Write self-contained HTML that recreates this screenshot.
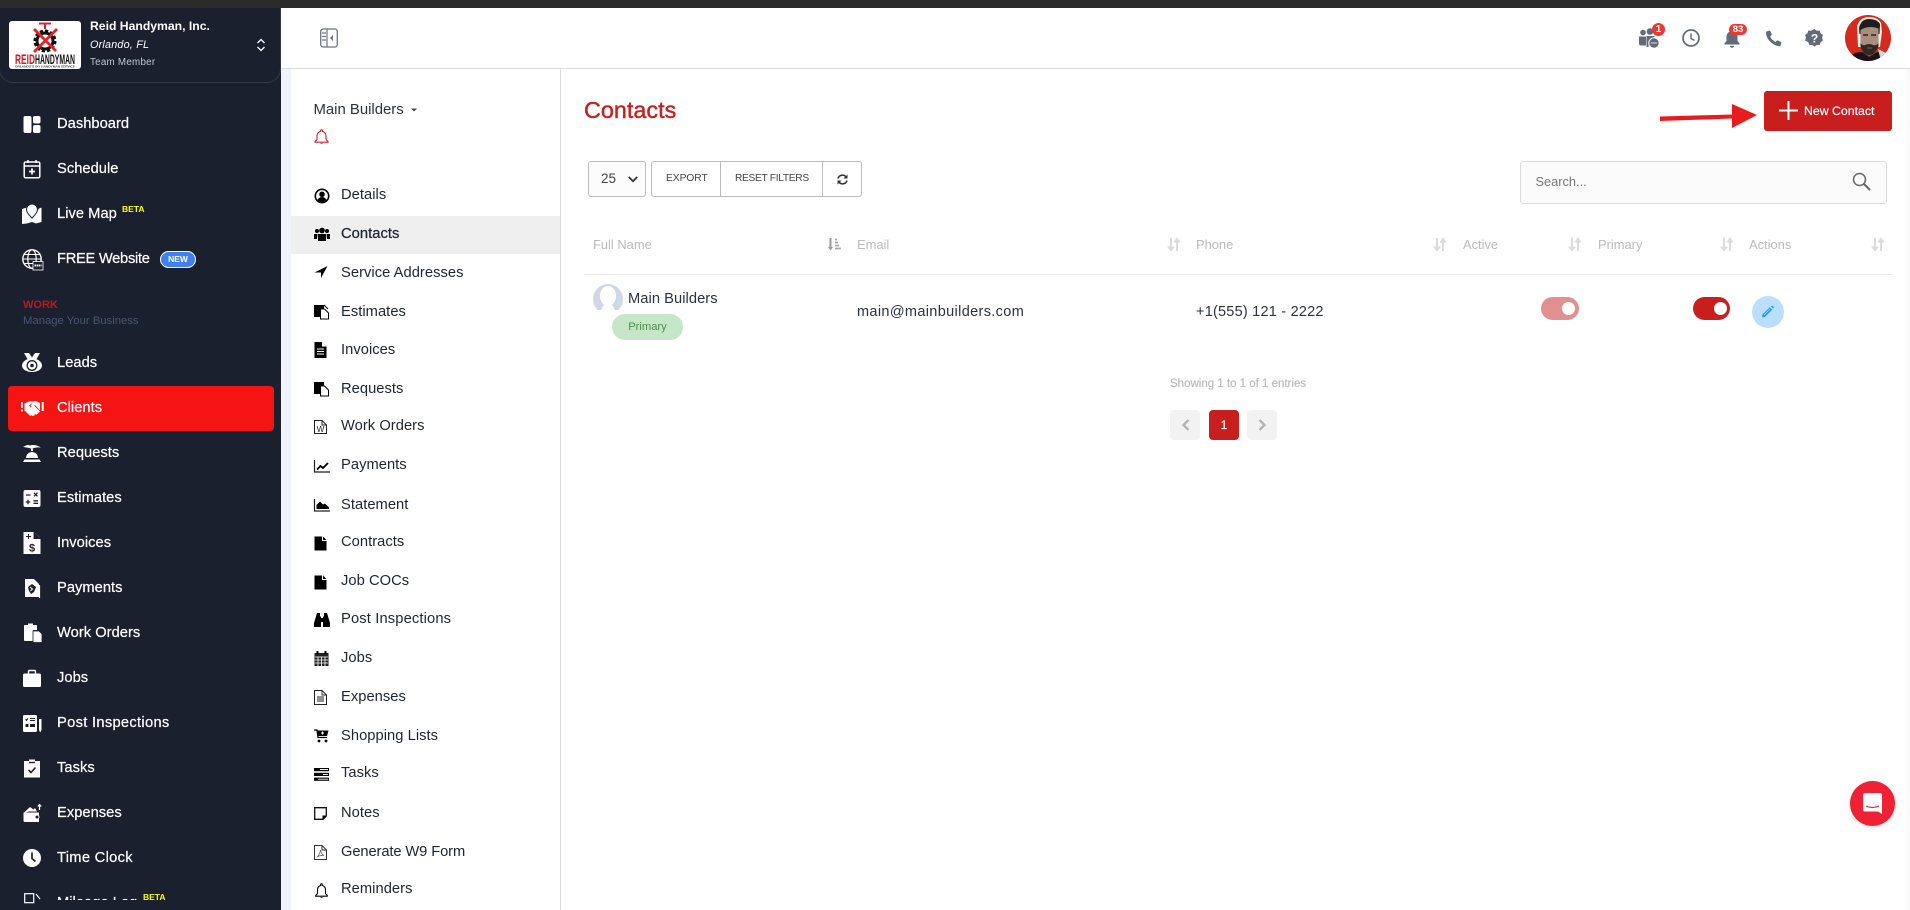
<!DOCTYPE html>
<html lang="en">
<head>
<meta charset="utf-8">
<title>Contacts</title>
<style>
*{box-sizing:border-box}
html,body{margin:0;padding:0;width:1910px;height:910px;overflow:hidden;background:#fff;font-family:"Liberation Sans",Arial,sans-serif}
.a{position:absolute;white-space:nowrap}
svg{position:absolute;display:block;overflow:visible}
#side{position:absolute;left:0;top:8px;width:281px;height:902px;background:#1a202e;overflow:hidden}
.si{position:absolute;left:57px;color:#fff;font-size:14.7px;line-height:22px;height:22px;white-space:nowrap;-webkit-text-stroke:.2px #fff;letter-spacing:.03px}
.ci{position:absolute;left:341px;color:#1f2433;font-size:14.7px;line-height:20px;height:20px;white-space:nowrap;letter-spacing:.05px}
.th{position:absolute;top:236px;color:#bbb;font-size:12.9px;line-height:18px;white-space:nowrap}
.pg{position:absolute;top:410px;width:30px;height:30px;background:#f2f2f2;border-radius:4px}
.sw{fill:#fff}
.k{fill:#000}
.g{fill:#636b78}
.sort path{stroke:#dcdcdc;stroke-width:2;fill:none}
</style>
</head>
<body>
<div class="a" style="left:0;top:0;width:1910px;height:8px;background:#2b2b2b"></div>

<!-- top bar -->
<div class="a" style="left:281px;top:8px;width:1629px;height:61px;background:#fff;border-bottom:1px solid #d9dce4"></div>
<div class="a" style="left:281px;top:69px;width:10px;height:841px;background:#f0f3f9"></div>
<div class="a" style="left:1906px;top:69px;width:4px;height:841px;background:#fbfbfb"></div>
<svg style="left:320px;top:28px" width="18" height="20" viewBox="0 0 18 20"><rect x=".7" y="1" width="16.6" height="18" rx="2.5" fill="none" stroke="#6c7380" stroke-width="1.3"/><path d="M7 1v18M2 5h4M2 8.500h4M2 12h4" stroke="#6c7380" stroke-width="1.200" fill="none"/><path d="M13 7l-3 3 3 3z" fill="#6c7380"/></svg>

<!-- top icons -->
<svg style="left:1639px;top:27px" width="22" height="22" viewBox="0 0 22 22">
<circle cx="4" cy="5.500" r="2.800" class="g"/><circle cx="11" cy="4.500" r="3.300" class="g"/><path d="M0 9.500h7v9H2a2 2 0 0 1-2-2zM7.500 9h8v5a6 6 0 0 0-6 6h-2z" class="g"/><circle cx="15" cy="16" r="5.200" class="g" stroke="#fff" stroke-width="1"/><circle cx="13" cy="16" r=".7" fill="#fff"/><circle cx="15" cy="16" r=".7" fill="#fff"/><circle cx="17" cy="16" r=".7" fill="#fff"/></svg>
<div class="a" style="left:1652px;top:23px;width:13px;height:13px;border-radius:50%;background:#ea3a33;color:#fff;font-size:10px;font-weight:bold;line-height:13px;text-align:center">1</div>
<svg style="left:1682px;top:29px" width="18" height="18" viewBox="0 0 18 18"><circle cx="9" cy="9" r="8" fill="none" stroke="#636b78" stroke-width="1.700"/><path d="M9 4.500V9.500l3.500 2" fill="none" stroke="#636b78" stroke-width="1.500"/></svg>
<svg style="left:1723px;top:28px" width="18" height="21" viewBox="0 0 18 21"><path d="M9 1.500a1.400 1.400 0 0 1 1.400 1.400v.4A5.500 5.500 0 0 1 14.500 8.500V13l2 2.200V16.500H1.500V15.200L3.500 13V8.500A5.500 5.500 0 0 1 7.600 3.300v-.4A1.400 1.400 0 0 1 9 1.500z" class="g"/><path d="M7 17.800h4a2 2 0 0 1-4 0z" class="g"/></svg>
<div class="a" style="left:1729px;top:24px;width:18px;height:11px;border-radius:6px;background:#ea3a33;color:#fff;font-size:9.500px;font-weight:bold;line-height:11px;text-align:center">83</div>
<svg style="left:1765px;top:30px" width="17" height="17" viewBox="0 0 17 17"><path d="M4.200.6 1 1.800C.6 8.500 7.500 16 15.300 16.300l1-3.300a1 1 0 0 0-.5-1.100l-3-1.400a1 1 0 0 0-1.100.2l-1.200 1.300C8.300 11 6 8.700 5.200 6.500l1.300-1.200a1 1 0 0 0 .2-1.100L5.300 1.100A1 1 0 0 0 4.200.6z" class="g"/></svg>
<svg style="left:1805px;top:28px" width="19" height="20" viewBox="0 0 19 20"><path d="M9.500 0l2.300 1.700 2.900-.1.900 2.700 2.300 1.700-.8 2.800.8 2.700-2.300 1.700-.9 2.800-2.900-.1-2.300 1.700-2.300-1.700-2.900.1-.9-2.800L.1 11.500l.8-2.700L.1 6l2.300-1.700.9-2.700 2.900.1z" class="g" transform="translate(0 1)"/><text x="9.500" y="14.500" font-size="12" font-weight="bold" text-anchor="middle" fill="#fff" font-family="Liberation Sans">?</text></svg>
<svg style="left:1845px;top:15px" width="46" height="46" viewBox="0 0 46 46"><defs><clipPath id="av"><circle cx="23" cy="23" r="23"/></clipPath></defs><g clip-path="url(#av)"><rect width="46" height="46" fill="#d32b1d"/><path d="M12 11Q15 2 24 2T36 8L37 17 35 32 13 32z" fill="#efe8e3"/><path d="M14 13Q16 4 24 4T35 9L34.500 19H14.500z" fill="#201c1b"/><path d="M15.500 15Q24 10 33.500 13.500V28L28 36H20L15.500 28z" fill="#a98d7d"/><path d="M15.500 28Q18 31 20 30 24 28 28 30 31 31 33.500 28V31Q30 40 24 40T15.500 31z" fill="#2f2927"/><path d="M22 33h5" stroke="#7c6357" stroke-width="1"/><path d="M18 20h5M26 20h5" stroke="#2b2524" stroke-width="1.400"/><path d="M3 46Q6 37 17 37L24 42 32 37Q41 38 43 46z" fill="#16161a"/><path d="M33 34l10 5-2 7h-5z" fill="#cfd6d9"/></g></svg>

<!-- sidebar -->
<div id="side"></div>
<div class="a" style="left:-1px;top:8px;width:282px;height:75px;border:1px solid #333947;border-top:0;border-radius:0 0 14px 14px"></div>
<div class="a" style="left:9px;top:21px;width:72px;height:48px;background:#fff;border-radius:3px"></div>
<svg style="left:9px;top:21px" width="72" height="48" viewBox="0 0 72 48">
<circle cx="36" cy="20" r="10" fill="none" stroke="#111" stroke-width="3" stroke-dasharray="3.200 2"/><circle cx="36" cy="20" r="8" fill="none" stroke="#111" stroke-width="3"/>
<path d="M25 8 47 30M48 8 25 31" stroke="#e8202a" stroke-width="2.800"/><path d="M30 2.500h12M36 2v6" stroke="#e8202a" stroke-width="2"/>
<text x="6" y="43" font-size="14" font-weight="bold" fill="#d8141e" textLength="20" lengthAdjust="spacingAndGlyphs" font-family="Liberation Sans">REID</text>
<text x="26" y="43" font-size="14" font-weight="bold" fill="#111" textLength="40" lengthAdjust="spacingAndGlyphs" font-family="Liberation Sans">HANDYMAN</text>
<text x="6" y="46.500" font-size="3" font-weight="bold" fill="#444" textLength="60" lengthAdjust="spacingAndGlyphs" font-family="Liberation Sans">ORLANDO'S DIY HANDYMAN SERVICE</text></svg>
<div class="a" style="left:90px;top:18px;color:#fff;font-size:12.200px;font-weight:bold;line-height:16px">Reid Handyman, Inc.</div>
<div class="a" style="left:90px;top:37px;color:#fff;font-size:10.800px;font-style:italic;line-height:16px;letter-spacing:.2px">Orlando, FL</div>
<div class="a" style="left:90px;top:55px;color:#c3c8d2;font-size:9.800px;line-height:16px;letter-spacing:.25px">Team Member</div>
<svg style="left:256px;top:38px" width="10" height="14" viewBox="0 0 10 14"><path d="M1.500 5 5 1.500 8.500 5M1.500 9 5 12.500 8.500 9" fill="none" stroke="#fff" stroke-width="1.300"/></svg>

<div class="a" style="left:8px;top:386px;width:266px;height:45px;background:#f51414;border-radius:4px"></div>

<div class="si" style="top:113px">Dashboard</div>
<div class="si" style="top:158px">Schedule</div>
<div class="si" style="top:203px">Live Map</div>
<div class="a" style="left:122px;top:204px;color:#ff0;font-size:8.500px;font-weight:bold;line-height:11px">BETA</div>
<div class="si" style="top:248px;letter-spacing:-.28px">FREE Website</div>
<div class="a" style="left:160px;top:251px;width:36px;height:17px;background:#3f80f0;border:1px solid #fff;border-radius:9px;color:#fff;font-size:8.500px;font-weight:bold;line-height:15px;text-align:center">NEW</div>
<div class="a" style="left:23px;top:299px;color:#b81c22;font-size:11px;font-weight:bold;line-height:13px">WORK</div>
<div class="a" style="left:23px;top:314px;color:#4a5670;font-size:11.300px;line-height:14px">Manage Your Business</div>
<div class="si" style="top:352px">Leads</div>
<div class="si" style="top:397px">Clients</div>
<div class="si" style="top:442px">Requests</div>
<div class="si" style="top:487px">Estimates</div>
<div class="si" style="top:532px">Invoices</div>
<div class="si" style="top:577px">Payments</div>
<div class="si" style="top:622px">Work Orders</div>
<div class="si" style="top:667px">Jobs</div>
<div class="si" style="top:712px;letter-spacing:.3px">Post Inspections</div>
<div class="si" style="top:757px">Tasks</div>
<div class="si" style="top:802px">Expenses</div>
<div class="si" style="top:847px;letter-spacing:.3px">Time Clock</div>
<div class="si" style="top:892px;height:8px;overflow:hidden">Mileage Log</div>
<div class="a" style="left:143px;top:892px;color:#ff0;font-size:8.500px;font-weight:bold;line-height:11px">BETA</div>

<!-- sidebar icons -->
<svg style="left:22px;top:114px" width="20" height="20" viewBox="0 0 20 20"><rect x="1.500" y="2" width="8" height="17" rx="2" class="sw"/><rect x="11" y="2" width="7.500" height="7.500" rx="2" class="sw"/><rect x="11" y="11" width="7.500" height="8" rx="2" class="sw"/></svg>
<svg style="left:22px;top:159px" width="20" height="20" viewBox="0 0 20 20"><rect x="2.200" y="3" width="15.600" height="15.800" rx="1.500" fill="none" stroke="#fff" stroke-width="1.500"/><path d="M2 7h16" stroke="#fff" stroke-width="1.500"/><path d="M6 1v3M14 1v3" stroke="#fff" stroke-width="1.500"/><path d="M10 9.500v6M7 12.500h6" stroke="#fff" stroke-width="1.800"/></svg>
<svg style="left:22px;top:204px" width="20" height="20" viewBox="0 0 20 20"><path d="M0 5l5-1.500L10 15l7-10.500 2.500-1V18l-5.500 1.500L10 18l-5 1.500-5 .500z" class="sw"/><path d="M10 0a5.500 5.500 0 0 1 5.500 5.500C15.500 9 10 14 10 14S4.500 9 4.500 5.500A5.500 5.500 0 0 1 10 0z" class="sw" stroke="#1a202e" stroke-width="1"/></svg>
<svg style="left:22px;top:249px" width="22" height="22" viewBox="0 0 22 22"><circle cx="10" cy="10" r="9.200" fill="none" stroke="#fff" stroke-width="1.400"/><ellipse cx="10" cy="10" rx="4.200" ry="9.200" fill="none" stroke="#fff" stroke-width="1.200"/><path d="M1 10h18M2 5.500h16M2 14.500h16" stroke="#fff" stroke-width="1.100"/><rect x="11" y="12.500" width="10" height="8.500" fill="#1a202e" stroke="#fff" stroke-width=".8"/><path d="M12.500 16.500h7" stroke="#fff" stroke-width="2" stroke-dasharray="1.500 .5"/></svg>
<svg style="left:22px;top:353px" width="20" height="20" viewBox="0 0 20 20"><path d="M2 0h5l3 4.500L13 0h5l-4 7H6z" class="sw"/><path d="M10 5.500c6 0 10 3.500 10 7s-4 6.500-10 6.500S0 16 0 12.500s4-7 10-7z" class="sw"/><circle cx="10" cy="12.500" r="4.800" fill="none" stroke="#1a202e" stroke-width="1.300"/><circle cx="10" cy="12.500" r="1.800" fill="#1a202e"/></svg>
<svg style="left:21px;top:398px" width="23" height="20" viewBox="0 0 23 20"><path d="M0 4h1.800v6H0zM0 11.500h1.800v2H0zM20.700 4h2v9h-2z" class="sw"/><path d="M3.500 5.500 9 3l3.500 1L8 7.500l1.500 2 3.500-2 6 6-1.500 1.500-1-.8.5 1.500-2 1-1-1-.5 1.800-2 .5-1-.8-1.500.5-6-5.700H3.500z" class="sw"/><path d="M12.500 3H15l4 2v7.500L14 7 10.500 9 9.500 8z" class="sw"/></svg>
<svg style="left:22px;top:443px" width="20" height="20" viewBox="0 0 20 20"><path d="M1 4Q6 1 8 2.500 13 1 19 4.500 13 4 10 6 7 4.500 1 4z" class="sw"/><path d="M9 6h2v2H9zM4 15a6 6 0 0 1 12 0z" class="sw"/><path d="M2.500 16.500h15L19 19H1z" class="sw"/></svg>
<svg style="left:22px;top:488px" width="20" height="20" viewBox="0 0 20 20"><rect x="1.500" y="2" width="17" height="17" rx="2" class="sw"/><path d="M4 7h4.500M6 11.700v4.600M3.800 14h4.500M11.500 12.800h4.500M11.500 15.300h4.500" stroke="#1a202e" stroke-width="1.300"/><path d="M12 4.800l3.500 3.500M15.500 4.800 12 8.300" stroke="#1a202e" stroke-width="1.200"/></svg>
<svg style="left:22px;top:532px" width="20" height="22" viewBox="0 0 20 22"><path d="M1.500 0H12l6.500 6.500V22H1.500z" class="sw"/><path d="M12 0v6.500h6.500" fill="#1a202e" stroke="#1a202e" stroke-width=".9"/><path d="M4 4.500h5M6.500 2v5" stroke="#1a202e" stroke-width="1"/><text x="10" y="19.500" font-size="11" font-weight="bold" text-anchor="middle" fill="#1a202e" font-family="Liberation Sans">$</text></svg>
<svg style="left:22px;top:578px" width="20" height="20" viewBox="0 0 20 20"><path d="M3 1h9l5 5v13H3z" class="sw"/><path d="M17.500 7v13" stroke="#fff" stroke-width="1.200"/><path d="M6 9l4-3 4 3-2 5-3 2-2-3z" fill="#1a202e"/><path d="M8 9l2.500 2-2 2" stroke="#fff" stroke-width="1" fill="none"/></svg>
<svg style="left:22px;top:623px" width="21" height="20" viewBox="0 0 21 20"><path d="M2 3q0-1 1-1h3V.5h5V2h3q1 0 1 1v4H11v11H3q-1 0-1-1z" class="sw"/><path d="M11 8h6l3 3v8.500H11z" class="sw" stroke="#1a202e" stroke-width=".8"/></svg>
<svg style="left:22px;top:668px" width="20" height="20" viewBox="0 0 20 20"><path d="M6.500 6V3.500q0-1 1-1h5q1 0 1 1V6" fill="none" stroke="#fff" stroke-width="1.400"/><rect x="1" y="5.500" width="18" height="13.500" rx="1.500" class="sw"/></svg>
<svg style="left:22px;top:713px" width="20" height="20" viewBox="0 0 20 20"><rect x="1" y="2" width="14" height="17" rx="1.500" class="sw"/><path d="M3.500 6.500l1 1 1.500-2M8 5.500h5M8 7.500h5" stroke="#1a202e" stroke-width="1"/><path d="M3.500 11h3v3h-3zM8 11h5v3H8z" fill="#1a202e"/><path d="M17 6h2.500v11L18.200 19.500 17 17z" class="sw"/></svg>
<svg style="left:22px;top:758px" width="20" height="20" viewBox="0 0 20 20"><path d="M2 3h5V1.500h6V3h5v16.500H2z" class="sw"/><path d="M7 4.500h6" stroke="#1a202e" stroke-width="1.400"/><path d="M6.500 12l2.500 2.500 4.500-5" fill="none" stroke="#1a202e" stroke-width="1.600"/></svg>
<svg style="left:22px;top:803px" width="20" height="20" viewBox="0 0 20 20"><path d="M1.500 10 8 4l3.500 2.500L13 5l2 3.500H7z" class="sw"/><path d="M1.500 9.500H17V19H3q-1.500 0-1.500-1.500z" class="sw"/><circle cx="15" cy="14" r="2" fill="#1a202e" stroke="#fff" stroke-width="1"/><path d="M17.500 7V2M15.800 3.500 17.500 1.500l1.700 2" stroke="#fff" stroke-width="1.200" fill="none"/></svg>
<svg style="left:22px;top:848px" width="20" height="20" viewBox="0 0 20 20"><circle cx="10" cy="10" r="9" class="sw"/><path d="M10 4.500V10.500l3.500 3" fill="none" stroke="#1a202e" stroke-width="1.700"/></svg>
<svg style="left:24px;top:893px" width="18" height="7" viewBox="0 0 18 7"><rect x=".7" y=".7" width="9" height="9" fill="none" stroke="#fff" stroke-width="1.200"/><path d="M12 1l4 5" stroke="#fff" stroke-width="1.200"/></svg>

<!-- client panel -->
<div class="a" style="left:560px;top:69px;width:1px;height:841px;background:#ddd"></div>
<div class="a" style="left:291px;top:216px;width:269px;height:38px;background:#efefef"></div>
<div class="a" style="left:313.500px;top:99.500px;color:#2d3242;font-size:14.900px;line-height:20px">Main Builders</div>
<svg style="left:411px;top:108px" width="6" height="4" viewBox="0 0 6 4"><path d="M0 .5h6L3 3.500z" fill="#444"/></svg>
<svg style="left:314px;top:129px" width="15" height="15" viewBox="0 0 15 15"><path d="M7.500 .8q1 0 1 1v.5Q12 3.500 12 7v3.500l2 2v.7H1v-.7l2-2V7q0-3.500 3.500-4.700v-.5q0-1 1-1z" fill="none" stroke="#d8202e" stroke-width="1.100"/><path d="M6 14h3q-1.500 1.500-3 0z" fill="#d8202e"/></svg>

<div class="ci" style="top:185px">Details</div>
<div class="ci" style="top:224px;-webkit-text-stroke:.25px #1f2433">Contacts</div>
<div class="ci" style="top:263px">Service Addresses</div>
<div class="ci" style="top:302px">Estimates</div>
<div class="ci" style="top:340px">Invoices</div>
<div class="ci" style="top:379px">Requests</div>
<div class="ci" style="top:416px">Work Orders</div>
<div class="ci" style="top:455px">Payments</div>
<div class="ci" style="top:495px">Statement</div>
<div class="ci" style="top:532px">Contracts</div>
<div class="ci" style="top:571px">Job COCs</div>
<div class="ci" style="top:609px;letter-spacing:.15px">Post Inspections</div>
<div class="ci" style="top:648px">Jobs</div>
<div class="ci" style="top:687px">Expenses</div>
<div class="ci" style="top:726px">Shopping Lists</div>
<div class="ci" style="top:763px">Tasks</div>
<div class="ci" style="top:803px">Notes</div>
<div class="ci" style="top:842px;letter-spacing:-.1px">Generate W9 Form</div>
<div class="ci" style="top:879px">Reminders</div>

<!-- panel icons (origin x=314, 16x16) -->
<svg style="left:314px;top:188px" width="16" height="16" viewBox="0 0 16 16"><circle cx="8" cy="8" r="6.700" fill="none" stroke="#000" stroke-width="1.600"/><circle cx="8" cy="6.300" r="2.800" class="k"/><path d="M3.500 12q1.500-3 4.500-3t4.500 3q-2 2.500-4.500 2.500T3.500 12z" class="k"/></svg>
<svg style="left:314px;top:227px" width="16" height="15" viewBox="0 0 16 15"><circle cx="3" cy="4" r="2" class="k"/><circle cx="13" cy="4" r="2" class="k"/><circle cx="8" cy="3.500" r="2.800" class="k"/><path d="M0 7h3.500L3 12H0zM12.500 7H16v5h-3zM4 7h8v7H4z" class="k"/></svg>
<svg style="left:314px;top:265px" width="15" height="15" viewBox="0 0 15 15"><path d="M13.500 1 .5 7.500H7V13z" class="k"/></svg>
<svg style="left:314px;top:304px" width="15" height="16" viewBox="0 0 15 16"><path d="M0 1h10v4H6v8H0z" class="k"/><path d="M6.500 5h4l4 4v6h-8z" fill="#fff" stroke="#000" stroke-width="1"/><path d="M10 1 14 5" stroke="#000"/></svg>
<svg style="left:314px;top:342px" width="14" height="16" viewBox="0 0 14 16"><path d="M.5 0H8l4.500 4.500V16H.5z" class="k"/><path d="M3 7h7M3 9.500h7M3 12h7" stroke="#fff" stroke-width="1"/><path d="M8 0v4.500h4.500" fill="#fff"/></svg>
<svg style="left:314px;top:381px" width="15" height="16" viewBox="0 0 15 16"><path d="M0 1h10v4H6v8H0z" class="k"/><path d="M6.500 5h4l4 4v6h-8z" fill="#fff" stroke="#000" stroke-width="1"/></svg>
<svg style="left:314px;top:420px" width="13" height="14" viewBox="0 0 13 14"><path d="M.5.500H8L12.500 5v8.500H.5z" fill="none" stroke="#222" stroke-width="1"/><path d="M8 .5V5h4.500" fill="none" stroke="#222" stroke-width="1"/><text x="6.500" y="12" font-size="8" text-anchor="middle" fill="#222" font-family="Liberation Sans">W</text></svg>
<svg style="left:314px;top:460px" width="16" height="13" viewBox="0 0 16 13"><path d="M.5 0v12h15.500" fill="none" stroke="#222" stroke-width="1.200"/><path d="M3 9.500 6.500 6 9 8l5-5" fill="none" stroke="#000" stroke-width="1.800"/></svg>
<svg style="left:314px;top:499px" width="16" height="13" viewBox="0 0 16 13"><path d="M.5 0v12h15.500" fill="none" stroke="#222" stroke-width="1.200"/><path d="M2.500 10V6L6 2.500 9 5.500 11 4.500 15 8.500V10z" class="k"/></svg>
<svg style="left:314px;top:536px" width="13" height="15" viewBox="0 0 13 15"><path d="M.5.500H8V5h4.500v9.500H.5zM9 .5 12.500 4H9z" class="k"/></svg>
<svg style="left:314px;top:575px" width="13" height="15" viewBox="0 0 13 15"><path d="M.5.500H8V5h4.500v9.500H.5zM9 .5 12.500 4H9z" class="k"/></svg>
<svg style="left:314px;top:612px" width="16" height="15" viewBox="0 0 16 15"><path d="M3 1h3v3.500h1V15H0v-4zM10 1h3l3 10v4H9V4.500h1z" class="k"/><path d="M7 6h2v4H7z" class="k"/></svg>
<svg style="left:314px;top:651px" width="15" height="15" viewBox="0 0 15 15"><rect x=".5" y="2" width="14" height="13" fill="#222"/><path d="M1 6h13M1 9h13M1 12h13M4 5.500V15M7.500 5.500V15M11 5.500V15" stroke="#fff" stroke-width=".8"/><path d="M3.500 0v3M11.500 0v3" stroke="#000" stroke-width="2"/></svg>
<svg style="left:314px;top:690px" width="13" height="15" viewBox="0 0 13 15"><path d="M.5.500H8L12.500 5v9.500H.5z" fill="none" stroke="#222" stroke-width="1"/><path d="M8 .5V5h4.500M3 7h7M3 9h7M3 11h7" fill="none" stroke="#222" stroke-width=".9"/></svg>
<svg style="left:314px;top:729px" width="15" height="14" viewBox="0 0 15 14"><path d="M0 1h3l1 7.500h9" fill="none" stroke="#000" stroke-width="1.300"/><path d="M3.500 1.500H14.500L13 7H4.500z" class="k"/><path d="M8.500 2.500v3M7 4h3" stroke="#fff" stroke-width="1"/><circle cx="5" cy="12" r="1.400" class="k"/><circle cx="12" cy="12" r="1.400" class="k"/></svg>
<svg style="left:314px;top:768px" width="15" height="13" viewBox="0 0 15 13"><rect width="15" height="3.200" class="k"/><rect y="4.800" width="15" height="3.200" class="k"/><rect y="9.600" width="15" height="3.200" class="k"/><path d="M6 1.500h8M9 6.400h5M4 11.200h10" stroke="#fff" stroke-width=".9"/></svg>
<svg style="left:314px;top:807px" width="13" height="13" viewBox="0 0 13 13"><path d="M.7.700h11.600V9L9 12.300H.7z" fill="none" stroke="#111" stroke-width="1.300"/><path d="M12.300 8.500H8.500v3.800z" class="k"/></svg>
<svg style="left:314px;top:845px" width="13" height="15" viewBox="0 0 13 15"><path d="M.5.500H8L12.500 5v9.500H.5z" fill="none" stroke="#333" stroke-width="1"/><path d="M8 .5V5h4.500" fill="none" stroke="#333" stroke-width="1"/><path d="M3 12Q6 9 6.500 5 7 9 10 10.500 6 10 3 12z" fill="none" stroke="#666" stroke-width=".8"/></svg>
<svg style="left:315px;top:883px" width="13" height="15" viewBox="0 0 13 15"><path d="M6.500 .8q.8 0 .8 1v.6Q10.500 3.500 10.500 7v3.500l1.800 2v.7H.7v-.7l1.800-2V7q0-3.500 3.200-4.600v-.6q0-1 .8-1z" fill="none" stroke="#000" stroke-width="1.100"/><path d="M5 14h3q-1.500 1.500-3 0z" class="k"/></svg>

<!-- main -->
<div class="a" style="left:584px;top:95px;color:#c81e1e;font-size:23.400px;line-height:30px;-webkit-text-stroke:.4px #c81e1e">Contacts</div>

<svg style="left:1660px;top:103px" width="100" height="26" viewBox="0 0 100 26"><path d="M0 13.500 72 11.500V1L97 12 72 25V15.500L0 18z" fill="#e81c1c"/></svg>
<div class="a" style="left:1764px;top:91px;width:128px;height:40px;background:#c81e1e;border-radius:3px"></div>
<svg style="left:1779px;top:101px" width="19" height="19" viewBox="0 0 19 19"><path d="M9.500 0v19M0 9.500h19" stroke="#fff" stroke-width="2"/></svg>
<div class="a" style="left:1804px;top:102px;color:#fff;font-size:12.300px;line-height:18px;-webkit-text-stroke:.2px #fff">New Contact</div>

<div class="a" style="left:588px;top:161px;width:58px;height:36px;background:#fcfcfc;border:1px solid #bdbdbd;border-radius:3px"></div>
<div class="a" style="left:601px;top:170px;color:#444;font-size:13.500px;line-height:18px">25</div>
<svg style="left:628px;top:176px" width="10" height="7" viewBox="0 0 10 7"><path d="M.8 1 5 5.200 9.200 1" fill="none" stroke="#333" stroke-width="1.800"/></svg>
<div class="a" style="left:651px;top:161px;width:211px;height:36px;background:#fff;border:1px solid #bdbdbd;border-radius:3px"></div>
<div class="a" style="left:720px;top:161px;width:1px;height:36px;background:#bdbdbd"></div>
<div class="a" style="left:822px;top:161px;width:1px;height:36px;background:#bdbdbd"></div>
<div class="a" style="left:666px;top:171px;color:#444;font-size:10.200px;line-height:16px">EXPORT</div>
<div class="a" style="left:735px;top:171px;color:#444;font-size:10.200px;line-height:16px;letter-spacing:-.3px">RESET FILTERS</div>
<svg style="left:837px;top:174px" width="11" height="11" viewBox="0 0 11 11"><path d="M1 4.500A4.500 4.500 0 0 1 9 3M10 6.500A4.500 4.500 0 0 1 2 8" fill="none" stroke="#333" stroke-width="1.500"/><path d="M10.500 .5V4.500H6.500zM.5 10.500V6.500H4.500z" fill="#333"/></svg>

<div class="a" style="left:1520px;top:161px;width:367px;height:43px;background:#fbfbfb;border:1px solid #dcdcdc;border-radius:3px"></div>
<div class="a" style="left:1535.500px;top:172.500px;color:#777;font-size:12.800px;line-height:18px">Search...</div>
<svg style="left:1852px;top:172px" width="19" height="19" viewBox="0 0 19 19"><circle cx="7.500" cy="7.500" r="6" fill="none" stroke="#666" stroke-width="1.500"/><path d="M12 12l6 6" stroke="#666" stroke-width="2"/></svg>

<div class="th" style="left:593px">Full Name</div>
<div class="th" style="left:857px">Email</div>
<div class="th" style="left:1196px">Phone</div>
<div class="th" style="left:1463px">Active</div>
<div class="th" style="left:1598px">Primary</div>
<div class="th" style="left:1749px">Actions</div>

<svg style="left:828px;top:238px" width="13" height="13" viewBox="0 0 13 13"><path d="M2.500 0v11" stroke="#999" stroke-width="2"/><path d="M0 9h5l-2.500 3.500z" fill="#999"/><path d="M7 1.500h2M7 4.500h3M7 7.500h4M7 10.500h6" stroke="#aaa" stroke-width="1.700"/></svg>
<svg class="sort" style="left:1168px;top:238px" width="12" height="13" viewBox="0 0 12 13"><path d="M3 0v11M0 8.500 3 12 6 8.500M9 13V2M6.500 4.500 9 1l2.500 3.500"/></svg>
<svg class="sort" style="left:1434px;top:238px" width="12" height="13" viewBox="0 0 12 13"><path d="M3 0v11M0 8.500 3 12 6 8.500M9 13V2M6.500 4.500 9 1l2.500 3.500"/></svg>
<svg class="sort" style="left:1569px;top:238px" width="12" height="13" viewBox="0 0 12 13"><path d="M3 0v11M0 8.500 3 12 6 8.500M9 13V2M6.500 4.500 9 1l2.500 3.500"/></svg>
<svg class="sort" style="left:1721px;top:238px" width="12" height="13" viewBox="0 0 12 13"><path d="M3 0v11M0 8.500 3 12 6 8.500M9 13V2M6.500 4.500 9 1l2.500 3.500"/></svg>
<svg class="sort" style="left:1872px;top:238px" width="12" height="13" viewBox="0 0 12 13"><path d="M3 0v11M0 8.500 3 12 6 8.500M9 13V2M6.500 4.500 9 1l2.500 3.500"/></svg>

<div class="a" style="left:584px;top:274px;width:1308px;height:1px;background:#e8e8e8"></div>

<svg style="left:593px;top:284px" width="30" height="30" viewBox="0 0 30 30"><defs><clipPath id="ph"><path d="M0 0h30v26H0z"/></clipPath></defs><g clip-path="url(#ph)"><circle cx="15" cy="15" r="15" fill="#d0d8e8"/><ellipse cx="15" cy="12" rx="8" ry="10" fill="#fff"/><path d="M8 30q0-10 7-10t7 10z" fill="#fff"/></g></svg>
<div class="a" style="left:628px;top:289px;color:#2d3242;font-size:14.700px;line-height:20px;letter-spacing:.05px">Main Builders</div>
<div class="a" style="left:612px;top:314px;width:71px;height:26px;background:#c6e6c8;border-radius:13px;color:#4c8b50;font-size:11.200px;line-height:26px;text-align:center">Primary</div>
<div class="a" style="left:857px;top:302px;color:#2d3242;font-size:14.500px;line-height:20px;letter-spacing:.35px">main@mainbuilders.com</div>
<div class="a" style="left:1196px;top:302px;color:#2d3242;font-size:14.500px;line-height:20px;letter-spacing:.22px">+1(555) 121 - 2222</div>

<div class="a" style="left:1541px;top:297px;width:38px;height:23px;background:#e28f8f;border-radius:12px"></div>
<div class="a" style="left:1562px;top:302px;width:13px;height:13px;background:#fff;border-radius:50%"></div>
<div class="a" style="left:1693px;top:297px;width:37px;height:23px;background:#c81e1e;border-radius:12px"></div>
<div class="a" style="left:1714px;top:302px;width:13px;height:13px;background:#fff;border-radius:50%"></div>
<div class="a" style="left:1752px;top:296px;width:32px;height:32px;background:#bbdefb;border-radius:50%"></div>
<svg style="left:1761px;top:305px" width="14" height="14" viewBox="0 0 14 14"><path d="M1.500 10 8.700 2.800 10.700 4.800 3.500 12H1.500z" fill="#2196f3" stroke="#2196f3" stroke-width=".6"/><path d="M3 10 8.800 4.200" stroke="#bbdefb" stroke-width=".7"/><path d="M10 1.500 11.200.5 13 2.300l-1 1.200z" fill="#2196f3"/></svg>

<div class="a" style="left:1170px;top:376px;color:#bbb;font-size:11.500px;line-height:16px;-webkit-text-stroke:.2px #bbb">Showing 1 to 1 of 1 entries</div>
<div class="pg" style="left:1170px"></div>
<div class="pg" style="left:1209px;background:#c81e1e;color:#fff;font-size:12px;line-height:30px;text-align:center;-webkit-text-stroke:.2px #fff">1</div>
<div class="pg" style="left:1247px"></div>
<svg style="left:1181px;top:419px" width="9" height="12" viewBox="0 0 9 12"><path d="M7.500 1 2.500 6l5 5" fill="none" stroke="#b5b5b5" stroke-width="2.400"/></svg>
<svg style="left:1258px;top:419px" width="9" height="12" viewBox="0 0 9 12"><path d="M1.500 1l5 5-5 5" fill="none" stroke="#b5b5b5" stroke-width="2.400"/></svg>

<!-- chat -->
<div class="a" style="left:1850px;top:781px;width:45px;height:45px;background:#ee2233;border-radius:50%;box-shadow:0 1px 6px rgba(0,0,0,.12)"></div>
<svg style="left:1863px;top:793px" width="20" height="21" viewBox="0 0 20 21"><path d="M2 0h15a2 2 0 0 1 2 2v19l-4-2.500H2a2 2 0 0 1-2-2V2a2 2 0 0 1 2-2z" fill="#fff"/><path d="M3 13q6.500 3 13 0" fill="none" stroke="#ee2233" stroke-width="1.200"/></svg>
</body>
</html>
